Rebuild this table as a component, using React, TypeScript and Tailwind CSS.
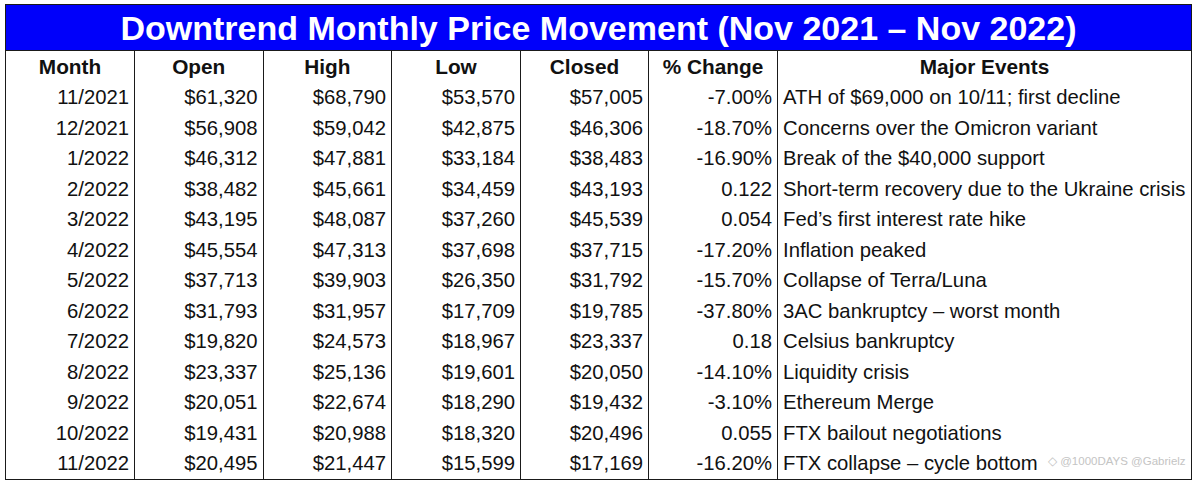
const rows: string[][] = [
  ["11/2021", "$61,320", "$68,790", "$53,570", "$57,005", "-7.00%", "ATH of $69,000 on 10/11; first decline"],
  ["12/2021", "$56,908", "$59,042", "$42,875", "$46,306", "-18.70%", "Concerns over the Omicron variant"],
  ["1/2022", "$46,312", "$47,881", "$33,184", "$38,483", "-16.90%", "Break of the $40,000 support"],
  ["2/2022", "$38,482", "$45,661", "$34,459", "$43,193", "0.122", "Short-term recovery due to the Ukraine crisis"],
  ["3/2022", "$43,195", "$48,087", "$37,260", "$45,539", "0.054", "Fed’s first interest rate hike"],
  ["4/2022", "$45,554", "$47,313", "$37,698", "$37,715", "-17.20%", "Inflation peaked"],
  ["5/2022", "$37,713", "$39,903", "$26,350", "$31,792", "-15.70%", "Collapse of Terra/Luna"],
  ["6/2022", "$31,793", "$31,957", "$17,709", "$19,785", "-37.80%", "3AC bankruptcy – worst month"],
  ["7/2022", "$19,820", "$24,573", "$18,967", "$23,337", "0.18", "Celsius bankruptcy"],
  ["8/2022", "$23,337", "$25,136", "$19,601", "$20,050", "-14.10%", "Liquidity crisis"],
  ["9/2022", "$20,051", "$22,674", "$18,290", "$19,432", "-3.10%", "Ethereum Merge"],
  ["10/2022", "$19,431", "$20,988", "$18,320", "$20,496", "0.055", "FTX bailout negotiations"],
  ["11/2022", "$20,495", "$21,447", "$15,599", "$17,169", "-16.20%", "FTX collapse – cycle bottom"],
];

const headers = ["Month", "Open", "High", "Low", "Closed", "% Change", "Major Events"];

const cols = "grid grid-cols-[129px_128.5px_128.5px_129px_128px_129px_1fr]";

export default function App() {
  return (
    <div className="relative w-[1200px] h-[483px] bg-white pl-[5px] pt-[4px] font-['Liberation_Sans',Arial,sans-serif] text-[#111]">
      <div className="w-[1187px] border-[1.5px] border-[#1a1a1a]">
        <div className="h-[46px] bg-[#0000fa] border-b-[1.5px] border-[#1a1a1a] flex items-center justify-center">
          <span className="text-white font-bold text-[34px] leading-none">
            Downtrend Monthly Price Movement (Nov 2021 – Nov 2022)
          </span>
        </div>
        <div className={cols}>
          {headers.map((h, i) => (
            <div
              key={h}
              className={`h-[31px] flex items-center justify-center font-bold text-[20.8px] ${i < 6 ? "border-r border-[#1a1a1a]" : ""}`}
            >
              {h}
            </div>
          ))}
          {rows.map((r) =>
            r.map((c, i) => (
              <div
                key={r[0] + i}
                className={`h-[30.5px] flex items-center text-[20.3px] leading-none whitespace-nowrap ${
                  i < 6 ? "justify-end pr-[5px] border-r border-[#1a1a1a]" : "justify-start pl-[5px]"
                }`}
              >
                {c}
              </div>
            ))
          )}
        </div>
      </div>
      <div className="absolute left-[1048px] top-[456px] text-[11.5px] leading-none text-[#c4c4c4] whitespace-nowrap pointer-events-none">
        ◇ @1000DAYS @Gabrielz
      </div>
    </div>
  );
}
